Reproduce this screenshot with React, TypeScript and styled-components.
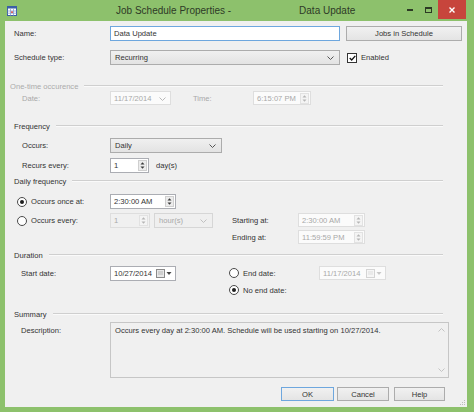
import React from 'react'
import styled, { createGlobalStyle } from 'styled-components'

const GlobalStyle = createGlobalStyle`
  html, body { margin: 0; padding: 0; background: #8dc16c; }
  body { font-family: "Liberation Sans", Arial, sans-serif; font-size: 7.6px; }
`

const Window = styled.div`
  width: 474px;
  height: 412px;
  background: #8dc16c;
  display: flex;
  flex-direction: column;
  overflow: hidden;
`

const TitleBar = styled.div`
  height: 21px;
  flex: none;
  display: flex;
  align-items: center;
`

const AppIcon = styled.svg`
  margin-left: 7px;
  flex: none;
`

const Title = styled.div`
  flex: 1;
  display: flex;
  margin-left: 99px;
  font-size: 10px;
  color: #2e3a27;
`

const TitlePart = styled.span<{ $gap?: number }>`
  margin-left: ${p => p.$gap ?? 0}px;
  white-space: nowrap;
`

const WinButton = styled.div<{ $w: number; $close?: boolean }>`
  width: ${p => p.$w}px;
  height: 19px;
  align-self: flex-start;
  display: flex;
  align-items: center;
  justify-content: center;
  background: ${p => (p.$close ? '#c7453c' : 'transparent')};
  margin-right: ${p => (p.$close ? 8 : 0)}px;
`

const Client = styled.div`
  flex: 1;
  margin: 0 7px 5px 5px;
  background: #f0f0f0;
  padding: 5px 5px 0 9px;
  display: flex;
  flex-direction: column;
  color: #333;
  position: relative;
`

const Row = styled.div<{ $mt?: number; $indent?: number; $h?: number }>`
  display: flex;
  align-items: center;
  height: ${p => p.$h ?? 15}px;
  margin-top: ${p => p.$mt ?? 0}px;
  padding-left: ${p => p.$indent ?? 0}px;
  flex: none;
`

const Label = styled.span<{ $w?: number; $disabled?: boolean; $ml?: number }>`
  width: ${p => (p.$w ? `${p.$w}px` : 'auto')};
  margin-left: ${p => p.$ml ?? 0}px;
  flex: none;
  white-space: nowrap;
  display: flex;
  align-items: center;
  gap: 4px;
  color: ${p => (p.$disabled ? '#a8a8a8' : '#333')};
`

const GroupHeader = styled.div<{ $mt: number; $shift?: number; $disabled?: boolean }>`
  display: flex;
  align-items: center;
  height: 10px;
  flex: none;
  margin-top: ${p => p.$mt}px;
  margin-left: ${p => -(p.$shift ?? 0)}px;
  margin-right: 19px;
  white-space: nowrap;
  color: ${p => (p.$disabled ? '#ababab' : '#333')};
  &::after {
    content: '';
    flex: 1;
    border-top: 1px solid #cfcfcf;
    border-bottom: 1px solid #fafafa;
    margin-left: 6px;
  }
`

const Field = styled.div<{ $w: number; $ml?: number; $h?: number; $focus?: boolean; $disabled?: boolean; $flat?: boolean }>`
  box-sizing: border-box;
  width: ${p => p.$w}px;
  height: ${p => p.$h ?? 15}px;
  margin-left: ${p => p.$ml ?? 0}px;
  flex: none;
  display: flex;
  align-items: center;
  padding: 0 1px 0 3px;
  background: ${p => (p.$flat ? '#f0f0f0' : p.$disabled ? '#fbfbfb' : '#fff')};
  border: 1px solid ${p => (p.$focus ? '#6ea7de' : p.$disabled ? '#dedede' : '#abadb3')};
  color: ${p => (p.$disabled ? '#a8a8a8' : '#333')};
  white-space: nowrap;
`

const FieldText = styled.span`
  flex: 1;
`

const Combo = styled.div<{ $w: number; $ml?: number; $disabled?: boolean }>`
  box-sizing: border-box;
  width: ${p => p.$w}px;
  height: 15px;
  margin-left: ${p => p.$ml ?? 0}px;
  flex: none;
  display: flex;
  align-items: center;
  justify-content: space-between;
  padding: 0 5px 0 4px;
  background: ${p => (p.$disabled ? '#efefef' : 'linear-gradient(#f0f0f0, #e3e3e3)')};
  border: 1px solid ${p => (p.$disabled ? '#d6d6d6' : '#acacac')};
  color: ${p => (p.$disabled ? '#a8a8a8' : '#333')};
`

const Button = styled.div<{ $w: number; $ml?: number; $h?: number; $primary?: boolean }>`
  box-sizing: border-box;
  width: ${p => p.$w}px;
  height: ${p => p.$h ?? 15}px;
  margin-left: ${p => p.$ml ?? 0}px;
  flex: none;
  display: flex;
  align-items: center;
  justify-content: center;
  background: linear-gradient(#f1f1f1, #e4e4e4);
  border: 1px solid ${p => (p.$primary ? '#6ea7de' : '#acacac')};
  color: #333;
`

const Check = styled.span`
  box-sizing: border-box;
  width: 10px;
  height: 10px;
  margin-left: 7px;
  margin-right: 4px;
  border: 1px solid #333;
  background: #fff;
  display: flex;
  align-items: center;
  justify-content: center;
  flex: none;
`

const Radio = styled.span<{ $on?: boolean }>`
  box-sizing: border-box;
  width: 10px;
  height: 10px;
  border-radius: 50%;
  border: 1px solid #4a4a4a;
  background: #fff;
  display: inline-flex;
  align-items: center;
  justify-content: center;
  flex: none;
  &::after {
    content: '';
    width: 4px;
    height: 4px;
    border-radius: 50%;
    background: #1e1e1e;
    display: ${p => (p.$on ? 'block' : 'none')};
  }
`

const Split = styled.div<{ $mt: number }>`
  display: flex;
  margin-top: ${p => p.$mt}px;
  flex: none;
`

const LeftCol = styled.div<{ $w: number }>`
  width: ${p => p.$w}px;
  flex: none;
`

const RightCol = styled.div`
  display: flex;
  flex-direction: column;
`

const Description = styled.div`
  box-sizing: border-box;
  width: 339px;
  height: 56px;
  border: 1px solid #c6c6c6;
  background: #f0f0f0;
  display: flex;
  padding: 3px 2px 3px 4px;
  color: #333;
  flex: none;
`

const ScrollCol = styled.div`
  width: 9px;
  display: flex;
  flex-direction: column;
  justify-content: space-between;
  align-items: center;
  padding: 2px 0;
`

const ButtonBar = styled.div`
  display: flex;
  justify-content: flex-end;
  margin-top: 9px;
  margin-right: 17px;
  flex: none;
`

const Grip = styled.svg`
  position: absolute;
  right: 1px;
  bottom: 1px;
`

const Chevron = ({ color = '#555', up = false }: { color?: string; up?: boolean }) => (
  <svg width="7" height="4" viewBox="0 0 7 4">
    <path d={up ? 'M0.5 3.5 L3.5 0.5 L6.5 3.5' : 'M0.5 0.5 L3.5 3.5 L6.5 0.5'} stroke={color} fill="none" strokeWidth="1" />
  </svg>
)

const Spin = ({ dim = false }: { dim?: boolean }) => (
  <svg width="9" height="11" viewBox="0 0 9 11" style={{ flex: 'none' }}>
    <rect x="0.5" y="0.5" width="8" height="10" fill={dim ? '#f4f4f4' : '#ececec'} stroke={dim ? '#e2e2e2' : '#cfcfcf'} />
    <path d="M2.5 4.5 L4.5 2.3 L6.5 4.5Z" fill={dim ? '#b5b5b5' : '#3a3a3a'} />
    <path d="M2.5 6.5 L4.5 8.7 L6.5 6.5Z" fill={dim ? '#b5b5b5' : '#3a3a3a'} />
  </svg>
)

const CalDrop = ({ dim = false }: { dim?: boolean }) => (
  <svg width="16" height="9" viewBox="0 0 16 9" style={{ flex: 'none', marginRight: 2 }}>
    <rect x="0.5" y="0.5" width="8" height="8" fill={dim ? '#f6f6f6' : '#e8e8e8'} stroke={dim ? '#d4d4d4' : '#8a8a8a'} />
    <path d="M2 3 H7 M2 5 H7" stroke={dim ? '#dddddd' : '#b4b4b4'} />
    <path d="M10.5 3 L15.5 3 L13 6Z" fill={dim ? '#c8c8c8' : '#444'} />
  </svg>
)

const App: React.FC = () => {
  return (
    <>
      <GlobalStyle />
      <Window>
        <TitleBar>
          <AppIcon width="10" height="10" viewBox="0 0 10 10">
            <rect x="0.5" y="0.5" width="9" height="9" fill="#fff" stroke="#3b5fa6" />
            <rect x="0.5" y="0.5" width="9" height="2" fill="#3b5fa6" />
            <path d="M3.5 3 V9.5 M6.5 3 V9.5 M0.5 5 H9.5 M0.5 7.2 H9.5" stroke="#8a9fd0" strokeWidth="0.8" />
            <rect x="4" y="5.4" width="2" height="1.5" fill="#d9534f" />
          </AppIcon>
          <Title>
            <TitlePart>Job Schedule Properties -</TitlePart>
            <TitlePart $gap={68}>Data Update</TitlePart>
          </Title>
          <WinButton $w={19}>
            <svg width="6" height="2" viewBox="0 0 6 2">
              <rect width="6" height="2" fill="#2c3a24" />
            </svg>
          </WinButton>
          <WinButton $w={19}>
            <svg width="7" height="6" viewBox="0 0 7 6">
              <rect x="0.5" y="0.5" width="6" height="5" fill="none" stroke="#2c3a24" />
              <rect x="0" y="0" width="7" height="2" fill="#2c3a24" />
            </svg>
          </WinButton>
          <WinButton $w={28} $close>
            <svg width="6" height="6" viewBox="0 0 6 6">
              <path d="M0.5 0.5 L5.5 5.5 M5.5 0.5 L0.5 5.5" stroke="#fff" strokeWidth="1.4" />
            </svg>
          </WinButton>
        </TitleBar>

        <Client>
          <Row>
            <Label $w={96}>Name:</Label>
            <Field $w={230} $focus>Data Update</Field>
            <Button $w={116} $ml={6}>Jobs in Schedule</Button>
          </Row>
          <Row $mt={9}>
            <Label $w={96}>Schedule type:</Label>
            <Combo $w={230}>
              <span>Recurring</span>
              <Chevron />
            </Combo>
            <Check>
              <svg width="7" height="6" viewBox="0 0 7 6">
                <path d="M0.7 3 L2.7 5 L6.3 0.8" stroke="#111" strokeWidth="1.3" fill="none" />
              </svg>
            </Check>
            <span>Enabled</span>
          </Row>

          <GroupHeader $mt={16} $shift={4} $disabled>One-time occurence</GroupHeader>
          <Row $h={14} $indent={8}>
            <Label $w={88} $disabled>Date:</Label>
            <Field $w={61} $h={14} $disabled>
              <FieldText>11/17/2014</FieldText>
              <span style={{ marginRight: 3 }}><Chevron color="#b8b8b8" /></span>
            </Field>
            <Label $w={60} $ml={22} $disabled>Time:</Label>
            <Field $w={58} $h={14} $disabled>
              <FieldText>6:15:07 PM</FieldText>
              <Spin dim />
            </Field>
          </Row>

          <GroupHeader $mt={16}>Frequency</GroupHeader>
          <Row $mt={7} $indent={8}>
            <Label $w={88}>Occurs:</Label>
            <Combo $w={112}>
              <span>Daily</span>
              <Chevron />
            </Combo>
          </Row>
          <Row $mt={5} $indent={8}>
            <Label $w={88}>Recurs every:</Label>
            <Field $w={39}>
              <FieldText>1</FieldText>
              <Spin />
            </Field>
            <Label $ml={7}>day(s)</Label>
          </Row>

          <GroupHeader $mt={3}>Daily frequency</GroupHeader>
          <Row $mt={8} $indent={3}>
            <Label $w={93}>
              <Radio $on />
              Occurs once at:
            </Label>
            <Field $w={66}>
              <FieldText>2:30:00 AM</FieldText>
              <Spin />
            </Field>
          </Row>
          <Split $mt={4}>
            <LeftCol $w={218}>
              <Row $indent={3}>
                <Label $w={93}>
                  <Radio />
                  Occurs every:
                </Label>
                <Field $w={40} $disabled $flat>
                  <FieldText>1</FieldText>
                  <Spin dim />
                </Field>
                <Combo $w={59} $ml={4} $disabled>
                  <span>hour(s)</span>
                  <Chevron color="#c0c0c0" />
                </Combo>
              </Row>
            </LeftCol>
            <RightCol>
              <Row $h={14}>
                <Label $w={66}>Starting at:</Label>
                <Field $w={67} $h={14} $disabled>
                  <FieldText>2:30:00 AM</FieldText>
                  <Spin dim />
                </Field>
              </Row>
              <Row $h={14} $mt={3}>
                <Label $w={66}>Ending at:</Label>
                <Field $w={67} $h={14} $disabled>
                  <FieldText>11:59:59 PM</FieldText>
                  <Spin dim />
                </Field>
              </Row>
            </RightCol>
          </Split>

          <GroupHeader $mt={6}>Duration</GroupHeader>
          <Split $mt={6}>
            <LeftCol $w={215}>
              <Row $indent={7}>
                <Label $w={89}>Start date:</Label>
                <Field $w={66}>
                  <FieldText>10/27/2014</FieldText>
                  <CalDrop />
                </Field>
              </Row>
            </LeftCol>
            <RightCol>
              <Row $h={14}>
                <Label $w={90}>
                  <Radio />
                  End date:
                </Label>
                <Field $w={67} $h={14} $disabled>
                  <FieldText>11/17/2014</FieldText>
                  <CalDrop dim />
                </Field>
              </Row>
              <Row $h={14} $mt={3}>
                <Label>
                  <Radio $on />
                  No end date:
                </Label>
              </Row>
            </RightCol>
          </Split>

          <GroupHeader $mt={12}>Summary</GroupHeader>
          <Split $mt={3}>
            <LeftCol $w={96}>
              <Row $h={9} $mt={4} $indent={7}>
                <Label>Description:</Label>
              </Row>
            </LeftCol>
            <Description>
              <FieldText>
                Occurs every day at 2:30:00 AM. Schedule will be used starting on 10/27/2014.
              </FieldText>
              <ScrollCol>
                <Chevron color="#c4c4c4" up />
                <Chevron color="#c4c4c4" />
              </ScrollCol>
            </Description>
          </Split>

          <ButtonBar>
            <Button $w={53} $h={14} $primary>OK</Button>
            <Button $w={52} $h={14} $ml={3}>Cancel</Button>
            <Button $w={51} $h={14} $ml={5}>Help</Button>
          </ButtonBar>

          <Grip width="6" height="6" viewBox="0 0 6 6">
            <rect x="4" y="0" width="1" height="1" fill="#bdbdbd" />
            <rect x="2" y="2" width="1" height="1" fill="#bdbdbd" />
            <rect x="4" y="2" width="1" height="1" fill="#bdbdbd" />
            <rect x="0" y="4" width="1" height="1" fill="#bdbdbd" />
            <rect x="2" y="4" width="1" height="1" fill="#bdbdbd" />
            <rect x="4" y="4" width="1" height="1" fill="#bdbdbd" />
          </Grip>
        </Client>
      </Window>
    </>
  )
}

export default App
